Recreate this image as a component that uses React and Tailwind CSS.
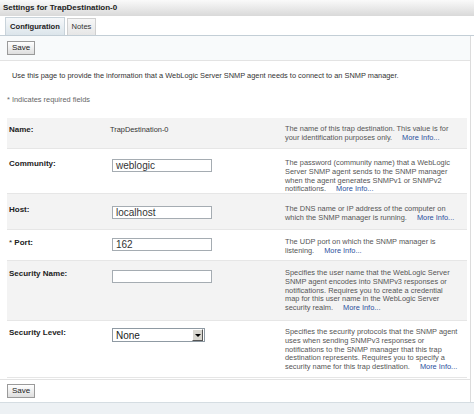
import React from "react";

const MoreInfo = () => (
  <span className="ml-[10px] text-[#2b4f9c]">More Info...</span>
);

const rows = [
  {
    label: "Name:",
    field: <span className="text-[#333]">TrapDestination-0</span>,
    desc: [
      "The name of this trap destination. This value is for",
      "your identification purposes only.",
    ],
    gray: true,
    h: "h-[31px]",
    pt: "pt-[7px]",
    fpt: "pt-[7px]",
  },
  {
    label: "Community:",
    input: "weblogic",
    desc: [
      "The password (community name) that a WebLogic",
      "Server SNMP agent sends to the SNMP manager",
      "when the agent generates SNMPv1 or SNMPv2",
      "notifications.",
    ],
    h: "h-[45px]",
    pt: "pt-[10px]",
    fpt: "pt-[10px]",
  },
  {
    label: "Host:",
    input: "localhost",
    desc: [
      "The DNS name or IP address of the computer on",
      "which the SNMP manager is running.",
    ],
    gray: true,
    h: "h-[36px]",
    pt: "pt-[11px]",
    fpt: "pt-[12px]",
  },
  {
    label: "Port:",
    required: true,
    input: "162",
    desc: ["The UDP port on which the SNMP manager is", "listening."],
    h: "h-[31px]",
    pt: "pt-[8px]",
    fpt: "pt-[8px]",
  },
  {
    label: "Security Name:",
    input: "",
    desc: [
      "Specifies the user name that the WebLogic Server",
      "SNMP agent encodes into SNMPv3 responses or",
      "notifications. Requires you to create a credential",
      "map for this user name in the WebLogic Server",
      "security realm.",
    ],
    gray: true,
    h: "h-[60px]",
    pt: "pt-[8px]",
    fpt: "pt-[9px]",
  },
  {
    label: "Security Level:",
    select: "None",
    desc: [
      "Specifies the security protocols that the SNMP agent",
      "uses when sending SNMPv3 responses or",
      "notifications to the SNMP manager that this trap",
      "destination represents. Requires you to specify a",
      "security name for this trap destination.",
    ],
    h: "h-[57px]",
    pt: "pt-[7px]",
    fpt: "pt-[7px]",
  },
];

const SaveButton = () => (
  <button className="h-[14px] w-[28px] border border-[#9a9a9a] bg-gradient-to-b from-white to-[#dedede] text-[8px] leading-[12px] text-[#222]">
    Save
  </button>
);

const Field = ({ row }) => {
  if (row.field)
    return <div className="-ml-[2px] text-[7.4px] leading-[9px]">{row.field}</div>;
  if (row.select !== undefined)
    return (
      <div className="flex h-[14px] w-[93px] items-center border border-[#8f9aa3] bg-white">
        <span className="flex-1 pl-[3px] text-[10px] text-[#222]">{row.select}</span>
        <span className="mr-[1px] flex h-[12px] w-[11px] items-center justify-center border border-t-white border-l-white border-b-[#555] border-r-[#555] bg-[#d8d6cf]">
          <span className="block h-0 w-0 border-x-[3px] border-t-[3px] border-x-transparent border-t-black" />
        </span>
      </div>
    );
  return (
    <div className="flex h-[13px] w-[100px] items-center border border-[#a5acb2] bg-white pl-[3px] text-[10px] text-[#333]">
      {row.input}
    </div>
  );
};

export default function App() {
  return (
    <div className="h-[414px] w-[474px] overflow-hidden bg-white font-['Liberation_Sans',Arial,sans-serif] text-[8px] text-[#333]">
      {/* title bar */}
      <div className="flex h-[16px] items-center bg-gradient-to-b from-[#fafafa] to-[#d9d9d9] pl-[3px] font-bold text-[#222]">
        Settings for TrapDestination-0
      </div>

      {/* tabs */}
      <div className="flex h-[20px] items-end gap-[2px] border-b border-[#c3ced6] pl-[5px]">
        <div className="flex h-[18px] w-[60px] items-center justify-center border border-b-0 border-[#c9d3da] bg-gradient-to-b from-[#f6f8fa] to-[#dce5eb] text-[7.6px] font-bold text-[#222]">
          Configuration
        </div>
        <div className="flex h-[17px] w-[29px] items-center justify-center border border-b-0 border-[#d0d0d0] bg-gradient-to-b from-[#f7f7f7] to-[#e6e6e6] text-[7.6px] text-[#333]">
          Notes
        </div>
      </div>

      {/* panel */}
      <div className="mr-[3px] flex h-[366px] flex-col border-r border-[#dcdcdc]">
        <div className="flex h-[25px] items-center border-b border-[#e3e3e3] bg-[#f8fafb] pl-[7px]">
          <SaveButton />
        </div>

        <div className="mt-[10px] pl-[12px] text-[7.4px] leading-[9px] text-[#333]">
          Use this page to provide the information that a WebLogic Server SNMP agent needs to connect to an SNMP manager.
        </div>
        <div className="mt-[15px] pl-[7px] text-[7.4px] leading-[9px] text-[#666]">
          * Indicates required fields
        </div>

        <div className="mt-[14px] ml-[7px] mr-[3px]">
          {rows.map((row) => (
            <div
              key={row.label}
              className={`flex border-b border-[#e6e6e6] ${row.h} ${row.gray ? "bg-[#f3f3f3]" : "bg-white"}`}
            >
              <div className={`w-[105px] pl-[2px] font-bold leading-[9px] text-[#222] ${row.pt}`}>
                {row.required && <span className="font-normal">* </span>}
                {row.label}
              </div>
              <div className={`w-[173px] ${row.fpt}`}>
                <Field row={row} />
              </div>
              <div className={`flex-1 whitespace-nowrap text-[7.4px] leading-[8.8px] text-[#555] ${row.pt}`}>
                {row.desc.map((line, i) => (
                  <div key={i}>
                    {line}
                    {i === row.desc.length - 1 && <MoreInfo />}
                  </div>
                ))}
              </div>
            </div>
          ))}
        </div>

        <div className="mt-auto flex h-[23px] items-center border-t border-[#e3e3e3] pl-[7px]">
          <SaveButton />
        </div>
      </div>

      {/* bottom strip */}
      <div className="h-[12px] border-t border-[#d5dde2] bg-[#edf1f4]" />
    </div>
  );
}
